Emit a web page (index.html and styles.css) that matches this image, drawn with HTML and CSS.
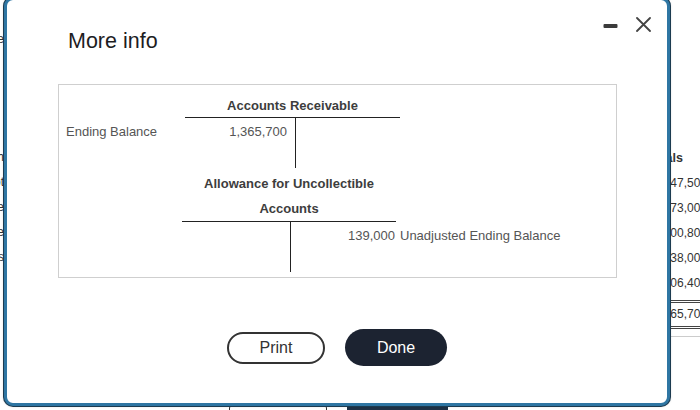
FILE: index.html
```html
<!DOCTYPE html>
<html lang="en">
<head>
<meta charset="utf-8">
<title>More info</title>
<link rel="stylesheet" href="styles.css">
</head>
<body>
<div class="page">
  <div class="left-col">
    <div class="lrow lrow-top">ble</div>
    <div class="lrow">Cash</div>
    <div class="lrow">Debt</div>
    <div class="lrow">Note</div>
    <div class="lrow">Sale</div>
    <div class="lrow">Fees</div>
  </div>
  <div class="right-col">
    <div class="rrow rhead">Totals</div>
    <div class="rrow">147,500</div>
    <div class="rrow">173,000</div>
    <div class="rrow">300,800</div>
    <div class="rrow">538,000</div>
    <div class="rrow rlast">706,400</div>
    <div class="rrow rtotal">1,865,700</div>
    <div class="rrule"></div>
  </div>
  <div class="under-buttons">
    <span class="ub ub-print"></span>
    <span class="ub ub-done"></span>
  </div>
</div>

<div class="modal">
  <div class="modal-header">
    <h1 class="modal-title">More info</h1>
    <div class="modal-tools">
      <svg class="tool" width="15" height="15" viewBox="0 0 15 15" aria-hidden="true"><rect x="0.5" y="7" width="14" height="4" rx="1" fill="#3b3b3b"/></svg>
      <svg class="tool" width="15" height="15" viewBox="0 0 15 15" aria-hidden="true"><path d="M1 1 L14 14 M14 1 L1 14" stroke="#444" stroke-width="1.8" fill="none" stroke-linecap="round"/></svg>
    </div>
  </div>

  <div class="info-box">
    <div class="taccount t1">
      <div class="t-title">Accounts Receivable</div>
      <div class="t-left">Ending Balance</div>
      <div class="t-dr">1,365,700</div>
      <div class="t-cr"></div>
      <div class="t-right"></div>
    </div>
    <div class="taccount t2">
      <div class="t-title">Allowance for Uncollectible<br>Accounts</div>
      <div class="t-left"></div>
      <div class="t-dr"></div>
      <div class="t-cr">139,000</div>
      <div class="t-right">Unadjusted Ending Balance</div>
    </div>
  </div>

  <div class="modal-actions">
    <button class="btn btn-outline">Print</button>
    <button class="btn btn-dark">Done</button>
  </div>
</div>
</body>
</html>
```

FILE: styles.css
```css
html, body {
  margin: 0;
  padding: 0;
  background: #fff;
  overflow: hidden;
}
body {
  width: 700px;
  height: 410px;
  font-family: "Liberation Sans", Arial, sans-serif;
  position: relative;
}

/* underlying page */
.page {
  display: flex;
  height: 410px;
  position: relative;
  color: #333;
  font-size: 12px;
}
.left-col {
  width: 4px;
  display: flex;
  flex-direction: column;
  align-items: flex-end;
  padding-top: 145px;
}
.lrow {
  line-height: 25px;
  white-space: nowrap;
}
.lrow-top {
  margin-top: -118px;
  margin-bottom: 93px;
}
.right-col {
  margin-left: 636px;
  width: 67px;
  padding-top: 146px;
  display: flex;
  flex-direction: column;
  align-items: flex-end;
}
.rrow {
  line-height: 25px;
  white-space: nowrap;
  text-align: right;
  width: 71px;
}
.rhead {
  font-weight: bold;
  padding-right: 24px;
  box-sizing: border-box;
  font-size: 12.5px;
}
.rlast {
  padding-bottom: 4px;
}
.rtotal {
  border-top: 3px double #444;
  border-bottom: 3px double #444;
  line-height: 23px;
}
.rrule {
  width: 71px;
  margin-top: 7px;
  border-top: 1px solid #ccc;
}
.under-buttons {
  position: absolute;
  left: 229px;
  top: 404px;
  display: flex;
  gap: 20px;
}
.ub {
  display: block;
  height: 20px;
}
.ub-print {
  width: 96px;
  border: 1px solid #333;
  border-radius: 4px;
}
.ub-done {
  width: 101px;
  background: #1f3246;
}

/* modal */
.modal {
  position: absolute;
  left: 4px;
  top: -3px;
  width: 666px;
  height: 409px;
  box-sizing: border-box;
  background: #fff;
  border: 3px solid #2f76a3;
  border-radius: 9px;
  box-shadow: 0 0 0 1px #1c3b50, 0 0 3px rgba(0,0,0,0.25);
  display: flex;
  flex-direction: column;
}
.modal-header {
  display: flex;
  justify-content: space-between;
  align-items: flex-start;
  padding: 17px 16px 0 61px;
}
.modal-title {
  margin: 12px 0 0 0;
  font-size: 21.5px;
  line-height: 24px;
  font-weight: normal;
  color: #1d1d1f;
}
.modal-tools {
  display: flex;
  gap: 18px;
}
.tool {
  display: block;
}

.info-box {
  margin: 31px 50px 0 51px;
  border: 1px solid #cfcfcf;
  padding: 10px 0 5px 0;
  font-size: 13px;
  color: #555;
}

.taccount {
  display: grid;
  grid-template-columns: 126px 111px 104px 1fr;
}
.t2 {
  grid-template-columns: 123px 109px 105px 1fr;
  margin-top: 3px;
}
.t-title {
  grid-column: 2 / 4;
  grid-row: 1;
  text-align: center;
  font-weight: bold;
  color: #3d3d3d;
  line-height: 22px;
  border-bottom: 1px solid #222;
}
.t2 .t-title {
  line-height: 25px;
}
.t-left, .t-dr, .t-cr, .t-right {
  grid-row: 2;
  height: 50px;
  line-height: 26px;
  padding-top: 1px;
  box-sizing: border-box;
  white-space: nowrap;
}
.t-left {
  grid-column: 1;
  padding-left: 7px;
}
.t-dr {
  grid-column: 2;
  text-align: right;
  padding-right: 8px;
  border-right: 1px solid #222;
}
.t-cr {
  grid-column: 3;
  text-align: right;
  padding-right: 1px;
}
.t-right {
  grid-column: 4;
  padding-left: 4px;
}

.modal-actions {
  display: flex;
  justify-content: center;
  align-items: center;
  gap: 20px;
  margin-top: 51px;
}
.btn {
  font-family: "Liberation Sans", Arial, sans-serif;
  font-size: 16px;
  border-radius: 19px;
  cursor: pointer;
  box-sizing: border-box;
}
.btn-outline {
  width: 98px;
  height: 32px;
  background: #fff;
  color: #333;
  border: 2px solid #333;
}
.btn-dark {
  width: 102px;
  height: 37px;
  background: #1c2331;
  color: #fff;
  border: none;
}
```
